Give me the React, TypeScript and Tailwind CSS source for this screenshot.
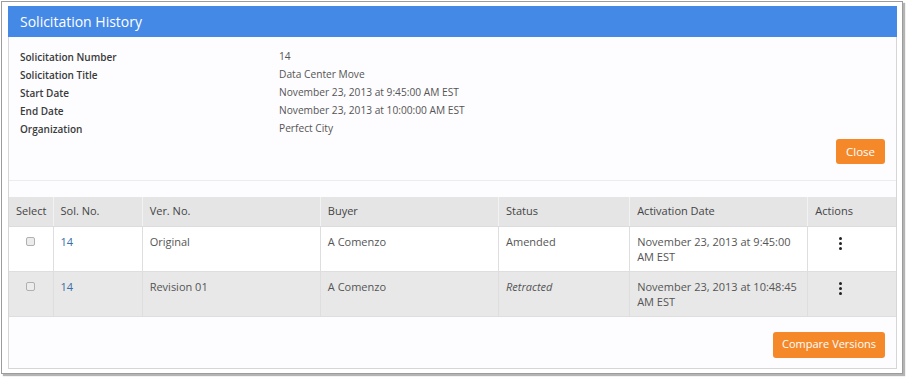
import React from "react";

const details = [
  { label: "Solicitation Number", value: "14" },
  { label: "Solicitation Title", value: "Data Center Move" },
  { label: "Start Date", value: "November 23, 2013 at 9:45:00 AM EST" },
  { label: "End Date", value: "November 23, 2013 at 10:00:00 AM EST" },
  { label: "Organization", value: "Perfect City" },
];

const versions = [
  { sol: "14", ver: "Original", buyer: "A Comenzo", status: "Amended", italic: false, date: "November 23, 2013 at 9:45:00 AM EST" },
  { sol: "14", ver: "Revision 01", buyer: "A Comenzo", status: "Retracted", italic: true, date: "November 23, 2013 at 10:48:45 AM EST" },
];

const cols = [44, 89, 178, 178, 131, 178, 88];
const heads = ["Select", "Sol. No.", "Ver. No.", "Buyer", "Status", "Activation Date", "Actions"];

function Kebab() {
  return (
    <div className="flex flex-col items-center gap-[2px] w-[4px]">
      <span className="block w-[3px] h-[3px] rounded-full bg-[#222]" />
      <span className="block w-[3px] h-[3px] rounded-full bg-[#222]" />
      <span className="block w-[3px] h-[3px] rounded-full bg-[#222]" />
    </div>
  );
}

export default function App() {
  return (
    <div className="w-[907px] h-[378px] bg-white overflow-hidden" style={{ fontFamily: "'Open Sans', 'Liberation Sans', sans-serif" }}>
      <div className="ml-px mt-px w-[902px] h-[373px] border border-[#9c9c9c] shadow-[2px_2px_1px_#b4b4b4] pl-[6px] pt-[4px] bg-white">
        <div className="w-[889px] border-x border-b border-[#d6d6d6] bg-[#fdfcfe]">
          {/* header */}
          <div className="h-[31px] bg-[#4589e6] flex items-center px-[12px] -mx-px">
            <h1 className="text-[14px] text-white leading-none">Solicitation History</h1>
          </div>

          {/* details */}
          <div className="pt-[11px] pl-[11px] pr-[11px] pb-[16px]">
            {details.map(d => (
              <div key={d.label} className="flex h-[18px] items-center">
                <span className="w-[259px] text-[10px] font-semibold text-[#3a3a3a]">{d.label}</span>
                <span className="text-[10.2px] text-[#555]">{d.value}</span>
              </div>
            ))}
            <div className="flex justify-end mt-px">
              <button className="h-[25px] px-[10px] rounded-[3px] bg-[#f5892a] text-white text-[11.5px]">Close</button>
            </div>
          </div>

          {/* versions */}
          <div className="border-t border-[#ececec] pt-[16px]">
            <table className="table-fixed border-collapse text-[11px] text-[#555] w-[887px]">
              <colgroup>
                {cols.map((w, i) => <col key={i} style={{ width: w }} />)}
              </colgroup>
              <thead>
                <tr className="bg-[#e5e5e5]">
                  {heads.map((h, i) => (
                    <th key={h} className={`h-[29px] px-[7px] font-normal text-left text-[#444] border-b border-[#dcdcdc] ${i > 0 ? "border-l border-l-[#f2f2f2]" : ""}`}>
                      {h}
                    </th>
                  ))}
                </tr>
              </thead>
              <tbody>
                {versions.map((v, r) => (
                  <tr key={v.ver} className={r % 2 ? "bg-[#e8e8e8]" : "bg-white"}>
                    <td className="h-[45px] align-top pt-[10px] border-b border-[#dedede]">
                      <div className="mx-auto w-[9px] h-[9px] border border-[#b0b0b0] rounded-[2px] bg-[#ececec]" />
                    </td>
                    <td className="align-top px-[7px] pt-[7px] leading-[15px] text-[#3b6ea5] border-l border-b border-[#dedede]">{v.sol}</td>
                    <td className="align-top px-[7px] pt-[7px] leading-[15px] border-l border-b border-[#dedede]">{v.ver}</td>
                    <td className="align-top px-[7px] pt-[7px] leading-[15px] border-l border-b border-[#dedede]">{v.buyer}</td>
                    <td className={`align-top px-[7px] pt-[7px] leading-[15px] border-l border-b border-[#dedede] ${v.italic ? "italic" : ""}`}>{v.status}</td>
                    <td className="align-top px-[7px] pt-[7px] leading-[15px] border-l border-b border-[#dedede]">{v.date}</td>
                    <td className="align-top pl-[30px] pt-[10px] border-l border-b border-[#dedede]">
                      <Kebab />
                    </td>
                  </tr>
                ))}
              </tbody>
            </table>
            <div className="flex justify-end pt-[15px] pb-[10px] pr-[11px]">
              <button className="h-[26px] px-[9px] rounded-[3px] bg-[#f5892a] text-white text-[11px]">Compare Versions</button>
            </div>
          </div>
        </div>
      </div>
    </div>
  );
}
